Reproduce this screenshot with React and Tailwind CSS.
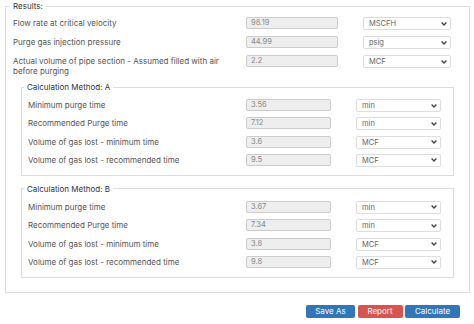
import React from "react";

const outerRows = [
  { label: "Flow rate at critical velocity", value: "98.19", unit: "MSCFH" },
  { label: "Purge gas injection pressure", value: "44.99", unit: "psig" },
  {
    label: "Actual volume of pipe section - Assumed filled with air before purging",
    value: "2.2",
    unit: "MCF",
  },
];

const methods = [
  {
    name: "A",
    rows: [
      { label: "Minimum purge time", value: "3.56", unit: "min" },
      { label: "Recommended Purge time", value: "7.12", unit: "min" },
      { label: "Volume of gas lost - minimum time", value: "3.6", unit: "MCF" },
      { label: "Volume of gas lost - recommended time", value: "9.5", unit: "MCF" },
    ],
  },
  {
    name: "B",
    rows: [
      { label: "Minimum purge time", value: "3.67", unit: "min" },
      { label: "Recommended Purge time", value: "7.34", unit: "min" },
      { label: "Volume of gas lost - minimum time", value: "3.8", unit: "MCF" },
      { label: "Volume of gas lost - recommended time", value: "9.8", unit: "MCF" },
    ],
  },
];

const Chevron = () => (
  <svg width="6" height="4" viewBox="0 0 6 4" className="shrink-0">
    <path d="M0.6 0.6 L3 3 L5.4 0.6" fill="none" stroke="#444" strokeWidth="1.4" />
  </svg>
);

const Row = ({ row, labelW, inputW, selectW }) => (
  <div className="flex items-start">
    <div className={`${labelW} pt-[1px] pr-2 text-[8px] leading-[10px] text-[#555]`}>{row.label}</div>
    <div
      className={`${inputW} h-[12px] rounded-[2px] border border-[#ccc] bg-[#eee] pl-[4px] text-[7.5px] leading-[10px] text-[#888]`}
    >
      {row.value}
    </div>
    <div
      className={`${selectW} ml-[25px] flex h-[13px] items-center justify-between rounded-[2px] border border-[#ddd] bg-white pl-[5px] pr-[3px] text-[7.5px] text-[#666]`}
    >
      <span>{row.unit}</span>
      <Chevron />
    </div>
  </div>
);

const Method = ({ method, className }) => (
  <fieldset className={`ml-[8px] w-[433px] border border-[#ddd] pl-[6px] pb-[8px] ${className}`}>
    <legend className="ml-[-4px] px-[3px] text-[8px] leading-[12px] text-[#333]">
      Calculation Method: {method.name}
    </legend>
    <div className="mt-[6px] flex flex-col gap-[5.33px]">
      {method.rows.map((row, i) => (
        <Row key={i} row={row} labelW="w-[218px]" inputW="w-[85px]" selectW="w-[85px]" />
      ))}
    </div>
  </fieldset>
);

export default function App() {
  return (
    <div className="h-[324px] w-[474px] overflow-hidden bg-white font-['Inter',sans-serif]">
      <fieldset className="ml-[5px] w-[465px] border border-[#ddd] pl-[7px] pb-[14px]">
        <legend className="ml-[-3px] px-[3px] text-[8px] leading-[12px] text-[#333]">Results:</legend>
        <div className="mt-[5px] flex flex-col gap-[6px]">
          {outerRows.map((row, i) => (
            <Row key={i} row={row} labelW="w-[233px]" inputW="w-[92px]" selectW="w-[88px]" />
          ))}
        </div>
        <Method method={methods[0]} className="mt-[5px]" />
        <Method method={methods[1]} className="mt-[7px]" />
      </fieldset>
      <div className="mt-[12px] flex justify-end gap-[2.5px] pr-[14px]">
        <button className="h-[13px] w-[49px] rounded-[2px] bg-[#3275b8] text-[8px] leading-[13px] text-white">
          Save As
        </button>
        <button className="h-[13px] w-[45px] rounded-[2px] bg-[#d9534f] text-[8px] leading-[13px] text-white">
          Report
        </button>
        <button className="h-[13px] w-[55px] rounded-[2px] bg-[#3275b8] text-[8px] leading-[13px] text-white">
          Calculate
        </button>
      </div>
    </div>
  );
}
